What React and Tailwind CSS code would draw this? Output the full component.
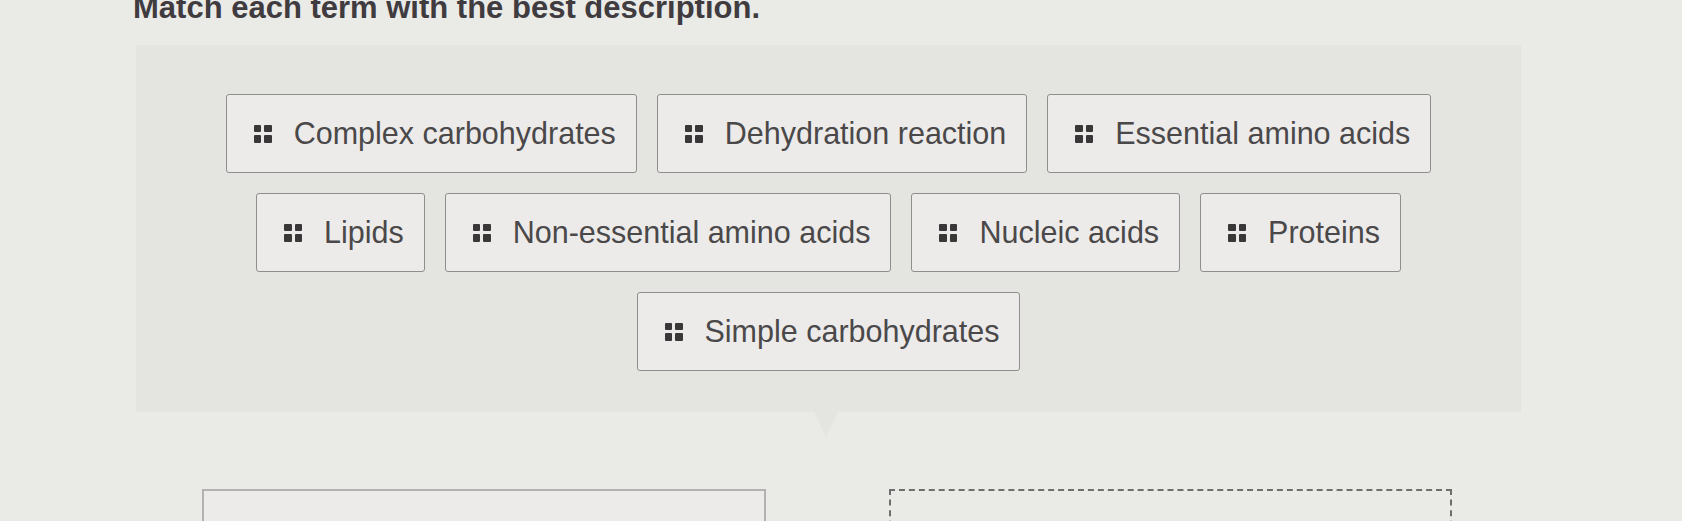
import React from 'react';

const rows = [
  ['Complex carbohydrates', 'Dehydration reaction', 'Essential amino acids'],
  ['Lipids', 'Non-essential amino acids', 'Nucleic acids', 'Proteins'],
  ['Simple carbohydrates']
];

function Grip() {
  return (
    <span className="grid grid-cols-2 gap-[3px] w-[18px] h-[18px] shrink-0">
      <span className="bg-[#3a3739] rounded-[1px]" />
      <span className="bg-[#3a3739] rounded-[1px]" />
      <span className="bg-[#3a3739] rounded-[1px]" />
      <span className="bg-[#3a3739] rounded-[1px]" />
    </span>
  );
}

function Term({ label }) {
  return (
    <div className="flex items-center h-[79px] pl-[27px] pr-[20px] gap-[22px] border-[1.5px] border-[#8f8d8e] rounded-[3px] bg-[#ecebe9] cursor-move">
      <Grip />
      <span className="text-[30.5px] leading-none text-[#4a4849] whitespace-nowrap">{label}</span>
    </div>
  );
}

export default function App() {
  return (
    <div
      className="w-[1682px] h-[521px] overflow-hidden bg-[#eaeae7]"
      style={{ fontFamily: '"Liberation Sans", Arial, sans-serif' }}
    >
      <div className="ml-[136px] w-[1385px]">
        <h2 className="-ml-[3px] mt-[-10px] h-[35px] text-[31px] leading-[36px] font-bold text-[#403b3f]">
          Match each term with the best description.
        </h2>

        <div className="mt-[20px] bg-[#e4e4e1] pt-[49px] pb-[41px] flex flex-col items-center gap-[20px]">
          {rows.map((row, i) => (
            <div key={i} className="flex justify-center gap-[20px]">
              {row.map(t => (
                <Term key={t} label={t} />
              ))}
            </div>
          ))}
        </div>

        <div className="ml-[678px] w-0 h-0 border-l-[12px] border-r-[12px] border-t-[25px] border-l-transparent border-r-transparent border-t-[#e4e4e1]" />

        <div className="mt-[52px] ml-[66px] flex gap-[123px]">
          <div className="w-[564px] h-[80px] border-2 border-[#b3b1b1] bg-[#ecebe9]" />
          <div className="w-[563px] h-[80px] border-2 border-dashed border-[#6f6d6e]" />
        </div>
      </div>
    </div>
  );
}
